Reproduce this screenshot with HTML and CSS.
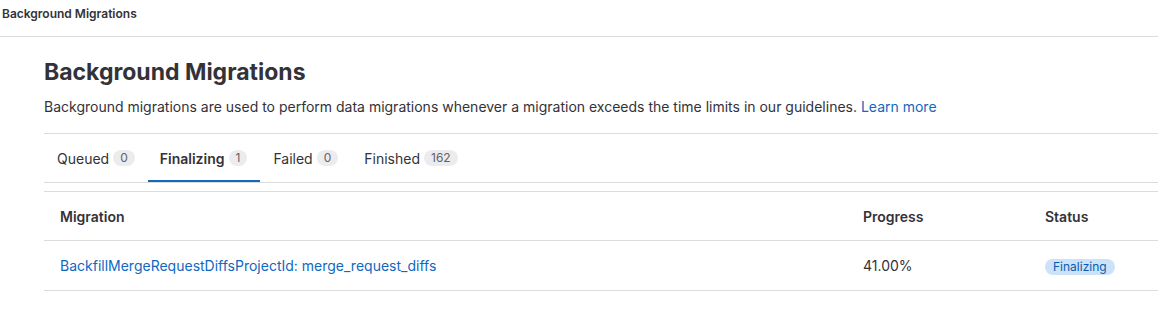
FILE: index.html
```html
<!DOCTYPE html>
<html>
<head>
<meta charset="utf-8">
<link rel="stylesheet" href="styles.css">
</head>
<body>
<div class="topbar">Background Migrations</div>
<main class="content">
  <h1 class="title">Background Migrations</h1>
  <p class="desc">Background migrations are used to perform data migrations whenever a migration exceeds the time limits in our guidelines. <a class="link" href="#">Learn more</a></p>
  <nav class="tabs">
    <div class="tab">Queued <span class="count">0</span></div>
    <div class="tab active">Finalizing <span class="count">1</span></div>
    <div class="tab">Failed <span class="count">0</span></div>
    <div class="tab">Finished <span class="count">162</span></div>
  </nav>
  <table class="table">
    <thead>
      <tr><th class="c1">Migration</th><th class="c2">Progress</th><th class="c3">Status</th></tr>
    </thead>
    <tbody>
      <tr><td><a class="link" href="#">BackfillMergeRequestDiffsProjectId: merge_request_diffs</a></td><td>41.00%</td><td><span class="status">Finalizing</span></td></tr>
    </tbody>
  </table>
</main>
</body>
</html>
```
FILE: styles.css
```css
* { box-sizing: border-box; }
body {
  margin: 0;
  font-family: Inter, "Noto Sans", sans-serif;
  color: #333238;
  background: #fff;
}
.topbar {
  height: 37px;
  padding: 6px 0 0 2px;
  font-size: 12px;
  font-weight: 600;
  border-bottom: 1px solid #dcdcde;
}
.content {
  margin-left: 44px;
}
.title {
  margin: 0;
  padding-top: 19px;
  font-size: 23px;
  line-height: 32px;
  font-weight: 700;
}
.desc {
  margin: 9px 0 0;
  font-size: 14px;
  line-height: 20px;
  padding-bottom: 16px;
  border-bottom: 1px solid #dcdcde;
}
.link { color: #1068bf; text-decoration: none; }
.tabs {
  display: flex;
  height: 49px;
  border-bottom: 1px solid #dcdcde;
}
.tab {
  display: flex;
  align-items: center;
  gap: 4px;
  padding: 0 13px 0 13px;
  font-size: 14px;
  height: 48px;
}
.tab.active {
  font-weight: 600;
  padding-left: 12px;
  box-shadow: inset 0 -2px 0 #1068bf;
}
.count {
  font-size: 12px;
  font-weight: 400;
  color: #626168;
  background: #ececef;
  border-radius: 8px;
  padding: 0 7px;
  line-height: 16px;
}
.table {
  margin-top: 8px;
  width: 100%;
  border-collapse: collapse;
  font-size: 14px;
}
.table th, .table td {
  text-align: left;
  padding: 0 16px;
  border-top: 1px solid #dcdcde;
  border-bottom: 1px solid #dcdcde;
}
.table th { height: 49px; font-weight: 600; }
.table td { height: 50px; }
.c1 { width: 803px; }
.c2 { width: 182px; }
.status {
  display: inline-block;
  font-size: 12px;
  line-height: 16px;
  padding: 0 8px;
  border-radius: 8px;
  background: #cbe2f9;
  color: #0b5cad;
}
```
